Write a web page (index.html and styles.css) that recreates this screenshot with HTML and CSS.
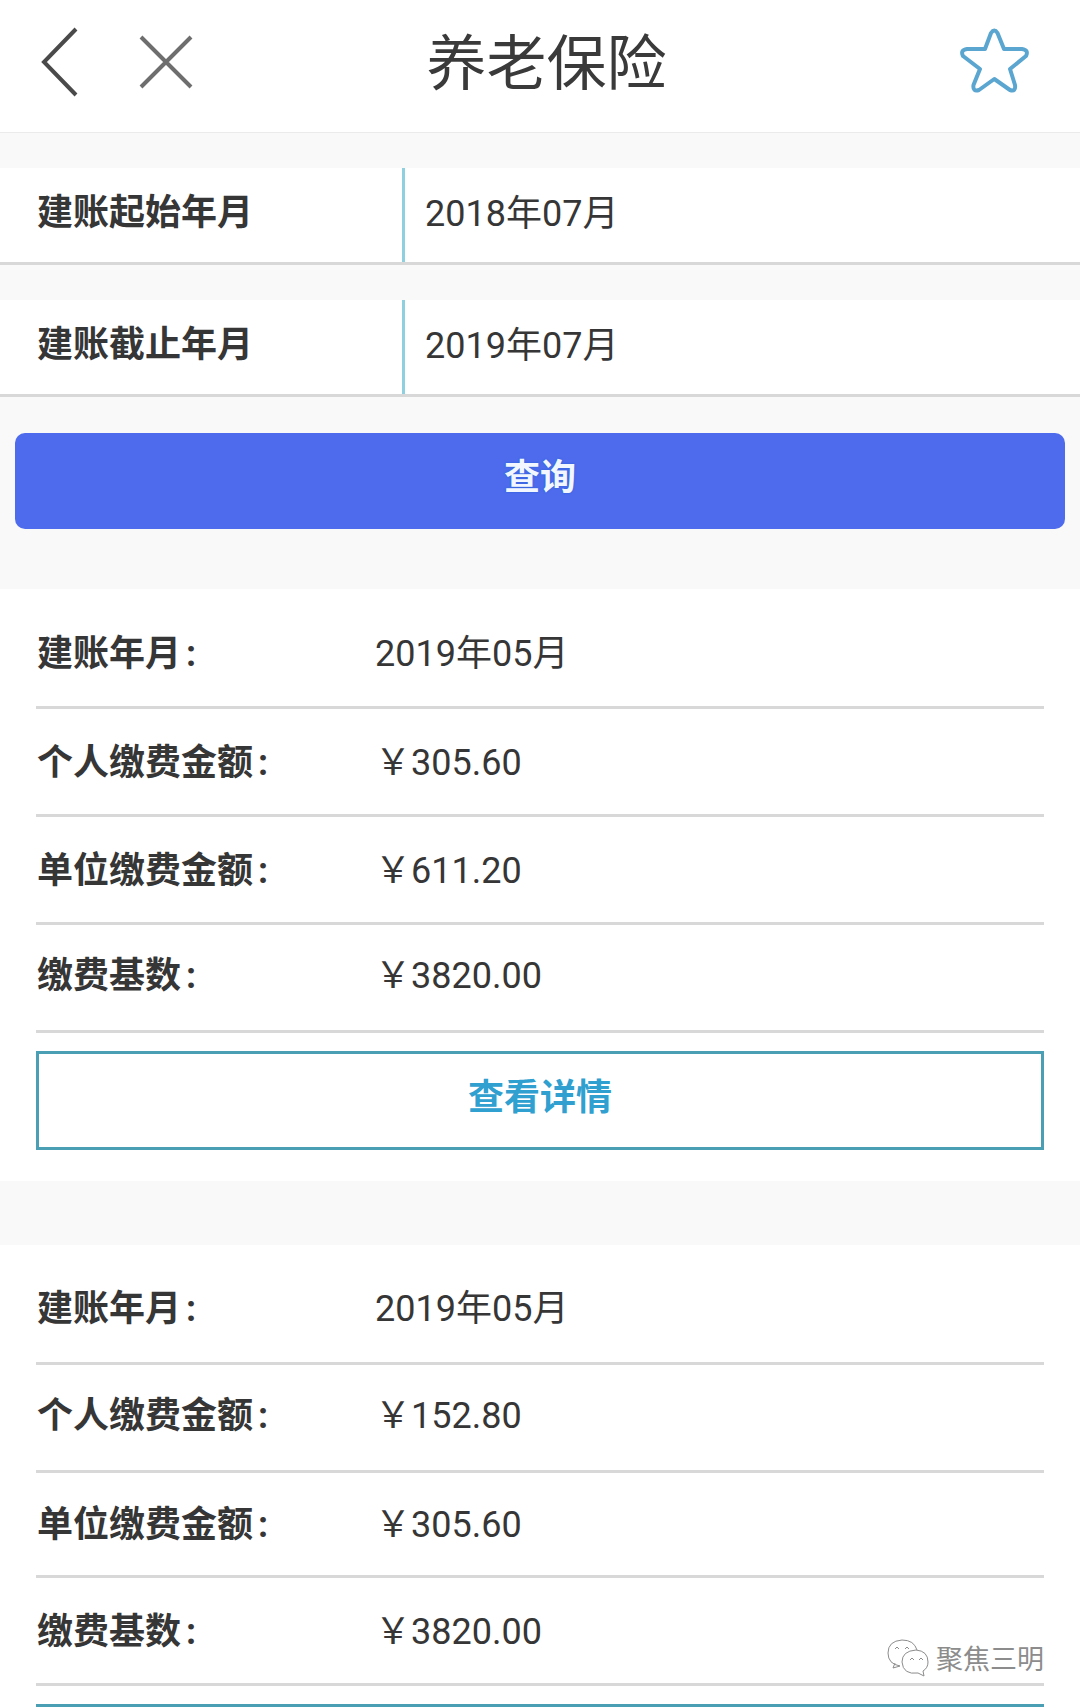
FILE: index.html
```html
<!DOCTYPE html>
<html lang="zh-CN">
<head>
    <meta charset="UTF-8">
    <meta name="viewport" content="width=device-width, initial-scale=1.0">
    <title>养老保险</title>
    <link rel="stylesheet" href="styles.css">
</head>
<body>
    <div class="page">
        <header class="topbar">
            <div class="topbar-left">
                <svg class="icon-back" width="37" height="70" viewBox="0 0 37 70"><path d="M35 2 L3 35 L35 68"/></svg>
                <svg class="icon-close" width="54" height="54" viewBox="0 0 54 54"><path d="M2 2 L52 52 M52 2 L2 52"/></svg>
            </div>
            <h1>养老保险</h1>
            <div class="topbar-right">
                <svg class="icon-star" width="70" height="66" viewBox="0 0 70 66"><path d="M31 5 Q34.3 0 37.5 5 L44 21 L62 21 Q69 22 66 28 L50 41 L55 57 Q56 64 50 62 L34.3 51 L19 62 Q12.5 64 13.5 57 L20 41 L3 28 Q0 22 7 21 L25 21 Z"/></svg>
            </div>
        </header>

        <div class="filter-row">
            <div class="filter-label">建账起始年月</div>
            <div class="filter-value">2018年07月</div>
        </div>
        <div class="filter-row">
            <div class="filter-label">建账截止年月</div>
            <div class="filter-value">2019年07月</div>
        </div>

        <div class="query-wrap">
            <button class="btn-query">查询</button>
        </div>

        <section class="card">
            <div class="row row-first"><span class="row-label">建账年月<i class="colon">:</i></span><span class="row-value">2019年05月</span></div>
            <div class="row"><span class="row-label">个人缴费金额<i class="colon">:</i></span><span class="row-value">&#xFFE5;305.60</span></div>
            <div class="row"><span class="row-label">单位缴费金额<i class="colon">:</i></span><span class="row-value">&#xFFE5;611.20</span></div>
            <div class="row row-raised"><span class="row-label">缴费基数<i class="colon">:</i></span><span class="row-value">&#xFFE5;3820.00</span></div>
            <button class="btn-detail">查看详情</button>
        </section>

        <section class="card card-next">
            <div class="row row-first"><span class="row-label">建账年月<i class="colon">:</i></span><span class="row-value">2019年05月</span></div>
            <div class="row row-raised"><span class="row-label">个人缴费金额<i class="colon">:</i></span><span class="row-value">&#xFFE5;152.80</span></div>
            <div class="row row-short"><span class="row-label">单位缴费金额<i class="colon">:</i></span><span class="row-value">&#xFFE5;305.60</span></div>
            <div class="row"><span class="row-label">缴费基数<i class="colon">:</i></span><span class="row-value">&#xFFE5;3820.00</span></div>
            <button class="btn-detail" aria-label="查看详情"></button>
        </section>

        <div class="watermark">
            <svg width="42" height="38" viewBox="0 0 42 38">
                <path d="M13 27 Q1 25 1 14 Q1 2 15 1 Q27 1 30 11"/>
                <path d="M13 27 L6 29 L8 24"/>
                <path d="M29 11 Q41 12 41 23 Q41 29 36 32 L37 37 L31 34 Q16 36 15 23 Q15 12 29 11 Z"/>
                <path d="M8 10 L10 8 L12 10 M18 10 L20 8 L22 10 M23 21 L25 19 L27 21 M32 21 L34 19 L36 21"/>
            </svg>
            <span>聚焦三明</span>
        </div>
    </div>
</body>
</html>
```

FILE: styles.css
```css
* {
    box-sizing: border-box;
}
html, body {
    margin: 0;
    padding: 0;
}
body {
    font-family: Roboto, "Noto Sans CJK SC", sans-serif;
    color: #363636;
    background: #f9f9fa;
}
.page {
    position: relative;
    width: 1080px;
    height: 1707px;
    overflow: hidden;
}

/* top bar */
.topbar {
    display: grid;
    grid-template-columns: 1fr auto 1fr;
    align-items: center;
    height: 133px;
    padding: 0 50px 0 41px;
    background: #fff;
    border-bottom: 1px solid #ebebeb;
}
.topbar h1 {
    margin: 0 0 2px 22px;
    font-size: 60px;
    font-weight: 400;
    line-height: 1.2;
    color: #3a3a3a;
}
.topbar-left {
    display: flex;
    align-items: center;
    gap: 61px;
}
.topbar-right {
    display: flex;
    justify-content: flex-end;
}
.icon-back path,
.icon-close path {
    fill: none;
    stroke-width: 4;
}
.icon-back path {
    stroke: #4a4a4a;
}
.icon-close path {
    stroke: #6e6e6e;
}
.icon-star path {
    fill: #fff;
    stroke: #5aa6d0;
    stroke-width: 4;
    stroke-linejoin: round;
}
.icon-star {
    margin-bottom: 10px;
}
.icon-back {
    margin-bottom: 8px;
}
.icon-close {
    margin-bottom: 8px;
}

/* filter rows */
.filter-row {
    display: flex;
    height: 97px;
    margin-top: 35px;
    background: #fff;
    border-bottom: 3px solid #d8d8d8;
}
.filter-label {
    width: 405px;
    padding: 0 0 12px 37px;
    display: flex;
    align-items: center;
    font-size: 36px;
    font-weight: 700;
    border-right: 3px solid #8fd0e0;
}
.filter-value {
    display: flex;
    align-items: center;
    padding: 0 0 10px 20px;
    font-size: 36px;
}

.query-wrap {
    padding: 36px 15px 60px;
}
.btn-query {
    display: block;
    width: 100%;
    height: 96px;
    padding: 0 0 14px;
    border: none;
    border-radius: 10px;
    background: #4d6bec;
    color: #f2f7ff;
    font-family: inherit;
    font-size: 36px;
    font-weight: 700;
    text-shadow: 0 0 2px #1f5fd0;
}

/* record cards */
.card {
    padding: 0 36px 31px;
    background: #fff;
}
.card-next {
    margin-top: 64px;
}
.row {
    display: flex;
    align-items: center;
    height: 108px;
    padding-bottom: 6px;
    border-bottom: 3px solid #d8d8d8;
}
.row-first {
    height: 120px;
    padding: 5px 0 0;
}
.card-next .row-first {
    padding-top: 2px;
}
.row-raised {
    padding-bottom: 11px;
}
.row-short {
    height: 105px;
}
.row-label {
    width: 339px;
    padding-left: 1px;
    font-size: 36px;
    font-weight: 700;
}
.row-value {
    font-size: 36px;
}
.colon {
    margin-left: 5px;
    font-style: normal;
}
.btn-detail {
    display: block;
    width: 100%;
    height: 99px;
    margin-top: 18px;
    padding: 0 0 13px;
    border: 3px solid #4a9fb5;
    background: #fff;
    color: #2fa0cf;
    font-family: inherit;
    font-size: 36px;
    font-weight: 700;
}

/* account mark laid over the page */
.watermark {
    position: absolute;
    left: 887px;
    top: 1638px;
    display: flex;
    align-items: center;
    gap: 7px;
    font-size: 27px;
    color: #8c8c8c;
    text-shadow: 1px 1px 0 #fff;
}
.watermark svg path {
    fill: none;
    stroke: #8c8c8c;
    stroke-width: 1;
}
```
